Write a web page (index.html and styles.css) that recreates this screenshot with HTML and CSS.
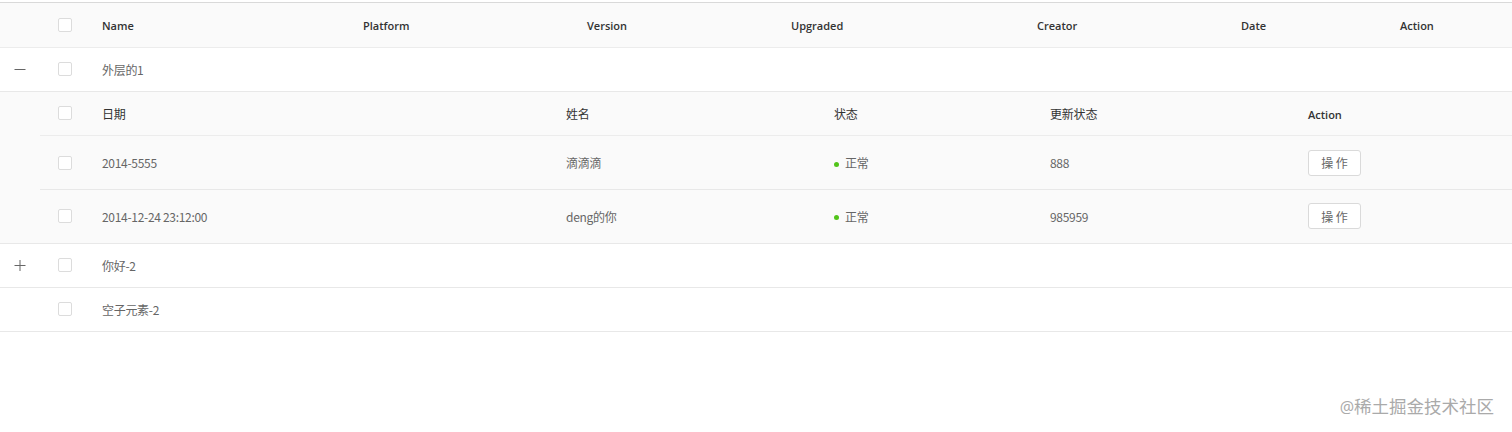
FILE: index.html
```html
<!DOCTYPE html>
<html>
<head>
  <meta charset="utf-8">
  <title>Nested Table</title>
  <link rel="stylesheet" href="styles.css">
</head>
<body>
  <div class="page">
    <table class="grid">
      <colgroup>
        <col style="width: 40px">
        <col style="width: 46px">
        <col style="width: 261px">
        <col style="width: 224px">
        <col style="width: 204px">
        <col style="width: 246px">
        <col style="width: 204px">
        <col style="width: 159px">
        <col style="width: 128px">
      </colgroup>
      <thead>
        <tr>
          <th></th>
          <th class="check-cell"><span class="checkbox"></span></th>
          <th>Name</th>
          <th>Platform</th>
          <th>Version</th>
          <th>Upgraded</th>
          <th>Creator</th>
          <th>Date</th>
          <th>Action</th>
        </tr>
      </thead>
      <tbody>
        <tr>
          <td class="expand-cell">
            <svg class="expand-icon" width="12" height="12" viewBox="0 0 12 12"><path d="M0.5 6.5h11" stroke="#666" stroke-width="1"/></svg>
          </td>
          <td class="check-cell"><span class="checkbox"></span></td>
          <td>外层的1</td>
          <td></td><td></td><td></td><td></td><td></td><td></td>
        </tr>
        <tr class="expanded">
          <td colspan="9" class="nested-cell">
            <table class="grid nested">
              <colgroup>
                <col style="width: 46px">
                <col style="width: 464px">
                <col style="width: 268px">
                <col style="width: 216px">
                <col style="width: 258px">
                <col style="width: 220px">
              </colgroup>
              <thead>
                <tr>
                  <th class="check-cell"><span class="checkbox"></span></th>
                  <th class="cjk">日期</th>
                  <th class="cjk">姓名</th>
                  <th class="cjk">状态</th>
                  <th class="cjk">更新状态</th>
                  <th>Action</th>
                </tr>
              </thead>
              <tbody>
                <tr>
                  <td class="check-cell"><span class="checkbox"></span></td>
                  <td>2014-5555</td>
                  <td>滴滴滴</td>
                  <td><span class="dot"></span>正常</td>
                  <td>888</td>
                  <td><button class="btn">操 作</button></td>
                </tr>
                <tr>
                  <td class="check-cell"><span class="checkbox"></span></td>
                  <td>2014-12-24 23:12:00</td>
                  <td>deng的你</td>
                  <td><span class="dot"></span>正常</td>
                  <td>985959</td>
                  <td><button class="btn">操 作</button></td>
                </tr>
              </tbody>
            </table>
          </td>
        </tr>
        <tr>
          <td class="expand-cell">
            <svg class="expand-icon" width="12" height="12" viewBox="0 0 12 12"><path d="M0.5 6.5h11M6 1v11" stroke="#666" stroke-width="1"/></svg>
          </td>
          <td class="check-cell"><span class="checkbox"></span></td>
          <td>你好-2</td>
          <td></td><td></td><td></td><td></td><td></td><td></td>
        </tr>
        <tr>
          <td class="expand-cell"></td>
          <td class="check-cell"><span class="checkbox"></span></td>
          <td>空子元素-2</td>
          <td></td><td></td><td></td><td></td><td></td><td></td>
        </tr>
      </tbody>
    </table>
  </div>

  <div class="watermark"><span class="at">@</span>稀土掘金技术社区</div>
</body>
</html>
```

FILE: styles.css
```css
/* Global styles */
body {
  margin: 0;
  padding: 0;
  font-family: "Noto Sans CJK SC", sans-serif;
  font-size: 12px;
  color: #666;
  background-color: #fff;
}

.page {
  margin-top: 2px;
  border-top: 1px solid #d9d9d9;
}

/* Table styles */
.grid {
  width: 100%;
  table-layout: fixed;
  border-collapse: collapse;
}

.grid th,
.grid td {
  height: 44px;
  padding: 0 0 0 16px;
  text-align: left;
  vertical-align: middle;
  border-bottom: 1px solid #e8e8e8;
  box-sizing: border-box;
  letter-spacing: -0.3px;
}

.grid th {
  background-color: #fafafa;
  color: #333;
  font-family: "Open Sans", "Noto Sans CJK SC", sans-serif;
  font-size: 11px;
  font-weight: 600;
  letter-spacing: 0;
  padding-top: 2px;
}

.grid th.cjk {
  font-family: "Noto Sans CJK SC", sans-serif;
  font-size: 12px;
  font-weight: 400;
  color: #333;
  letter-spacing: -0.2px;
  padding-top: 0;
}

.grid > thead > tr > th {
  border-bottom: 1px solid #ececec;
}

.expand-cell {
  padding-left: 14px !important;
}

.expand-icon {
  display: block;
}

.check-cell {
  padding-left: 18px !important;
  padding-top: 0 !important;
}

.checkbox {
  display: block;
  width: 14px;
  height: 14px;
  border: 1px solid #dcdcdc;
  border-radius: 2px;
  background-color: #fff;
  box-sizing: border-box;
}

/* Expanded row */
.expanded > .nested-cell {
  padding: 0 0 0 40px;
  background-color: #fafafa;
}

.nested th,
.nested td {
  background-color: #fafafa;
}

.nested tbody td {
  height: 54px;
}

.nested tbody tr:last-child td {
  border-bottom: none;
  height: 53px;
}

.dot {
  display: inline-block;
  width: 5px;
  height: 5px;
  margin: 0 6px 1px 0;
  border-radius: 50%;
  background-color: #52c41a;
  vertical-align: middle;
}

.btn {
  width: 53px;
  height: 26px;
  padding: 0;
  font-family: inherit;
  font-size: 12px;
  color: #666;
  background-color: #fff;
  border: 1px solid #dadada;
  border-radius: 3px;
}

/* Watermark */
.watermark {
  position: absolute;
  right: 18px;
  top: 394px;
  font-size: 17.5px;
  line-height: 24px;
  color: #aaa;
}

.watermark .at {
  font-family: "Open Sans", sans-serif;
  font-size: 16px;
}
```
